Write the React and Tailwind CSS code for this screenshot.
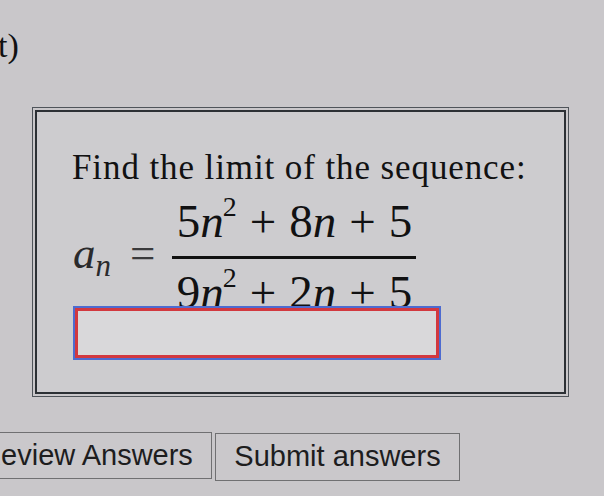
import React from 'react';

const Plus = () => <span className="mx-[13px]">+</span>;
const Sq = () => <span className="relative -top-[21px] -ml-[1px] text-[28px] leading-none">2</span>;

const Poly = ({ a, b, c }) => (
  <div className="text-[47px] leading-[46px] text-center whitespace-nowrap">
    {a}<i>n</i><Sq /><Plus />{b}<i>n</i><Plus />{c}
  </div>
);

const App = () => {
  return (
    <div className="w-[604px] h-[496px] overflow-hidden bg-[#c9c7ca] font-['Liberation_Serif',serif] text-[#111112]">
      <div className="pt-[26px] -ml-[2px] text-[34px] leading-[40px]">t)</div>

      <div className="mt-[41px] ml-[32px] w-[537px] h-[290px] border border-[#4f545a] p-[2px]">
        <div className="h-full border-2 border-[#2c3035] bg-[#cdcccf] pl-[35px] pt-[36px]">
          <div className="text-[35px] leading-[40px] tracking-[0.9px] whitespace-nowrap">
            Find the limit of the sequence:
          </div>

          <div className="flex items-start mt-[10px]">
            <div className="mt-[33px] flex items-baseline text-[45px] leading-[45px]">
              <i className="ml-[1px] text-[#2a2a2c]">a</i>
              <i className="text-[31px] relative top-[8px] text-[#2a2a2c]">n</i>
              <span className="ml-[19px] text-[#3a3a3c]">=</span>
            </div>
            <div className="ml-[17px] w-[244px] flex flex-col">
              <Poly a="5" b="8" c="5" />
              <div className="mt-[12px] h-[3px] bg-[#111]"></div>
              <div className="mt-[10px]">
                <Poly a="9" b="2" c="5" />
              </div>
            </div>
          </div>

          <div className="relative z-10 -mt-[9px] ml-[1px] w-[368px] h-[54px] border-2 border-[#4d6bd0]">
            <input className="block w-full h-full border-[3px] border-[#d2383f] bg-[#d9d8da] outline-none" />
          </div>
        </div>
      </div>

      <div className="mt-[35px] -ml-[39px] flex gap-[3px] font-['Liberation_Sans',sans-serif] text-[29px] text-[#1d1d1e]">
        <button className="w-[251px] h-[47px] border border-[#707072] bg-[#cac8cb] flex items-center justify-center">
          Review Answers
        </button>
        <button className="mt-[1px] w-[245px] h-[48px] border border-[#707072] bg-[#cac8cb] flex items-center justify-center">
          Submit answers
        </button>
      </div>
    </div>
  );
};

export default App;
